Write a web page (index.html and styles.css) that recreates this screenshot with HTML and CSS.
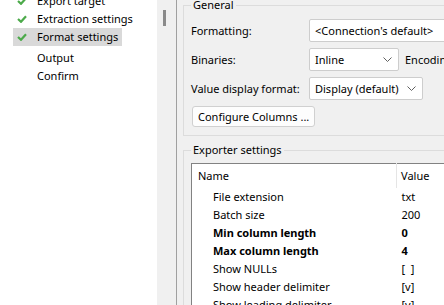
FILE: index.html
```html
<!DOCTYPE html>
<html>
    <head>
        <title>Data transfer - Format settings</title>
        <link rel="stylesheet" href="styles.css">
    </head>
    <body>
        <div class="window">
            <div class="nav">
                <ul class="steps">
                    <li><span class="step"><svg class="check" viewBox="0 0 10 8"><polyline points="1,4 4,6.8 9,1.2"/></svg>Export target</span></li>
                    <li><span class="step"><svg class="check" viewBox="0 0 10 8"><polyline points="1,4 4,6.8 9,1.2"/></svg>Extraction settings</span></li>
                    <li><span class="step selected"><svg class="check" viewBox="0 0 10 8"><polyline points="1,4 4,6.8 9,1.2"/></svg>Format settings</span></li>
                    <li><span class="step"><span class="no-check"></span>Output</span></li>
                    <li><span class="step"><span class="no-check"></span>Confirm</span></li>
                </ul>
            </div>
            <div class="gutter"><div class="thumb"></div></div>
            <div class="main">
                <fieldset class="group general">
                    <legend>General</legend>
                    <div class="form-grid">
                        <label>Formatting:</label>
                        <div class="combo wide">&lt;Connection's default&gt;</div>

                        <label>Binaries:</label>
                        <div class="inline-row">
                            <div class="combo binaries">Inline<svg class="arrow" viewBox="0 0 9 5"><polyline points="0.5,0.5 4.5,4.5 8.5,0.5"/></svg></div>
                            <span class="side-label">Encoding:</span>
                        </div>

                        <label>Value display format:</label>
                        <div class="combo display">Display (default)<svg class="arrow" viewBox="0 0 9 5"><polyline points="0.5,0.5 4.5,4.5 8.5,0.5"/></svg></div>
                    </div>
                    <button class="btn">Configure Columns ...</button>
                </fieldset>

                <fieldset class="group exporter">
                    <legend>Exporter settings</legend>
                    <table class="props">
                        <thead>
                            <tr>
                                <th class="col-name">Name</th>
                                <th class="col-value">Value</th>
                            </tr>
                        </thead>
                        <tbody>
                            <tr><td class="prop">File extension</td><td>txt</td></tr>
                            <tr><td class="prop">Batch size</td><td>200</td></tr>
                            <tr class="changed"><td class="prop">Min column length</td><td>0</td></tr>
                            <tr class="changed"><td class="prop">Max column length</td><td>4</td></tr>
                            <tr><td class="prop">Show NULLs</td><td>[&nbsp;&nbsp;]</td></tr>
                            <tr><td class="prop">Show header delimiter</td><td>[v]</td></tr>
                            <tr><td class="prop">Show leading delimiter</td><td>[v]</td></tr>
                        </tbody>
                    </table>
                </fieldset>
            </div>
        </div>
    </body>
</html>
```

FILE: styles.css
```css
body{
    margin: 0;
    width: 444px;
    height: 305px;
    overflow: hidden;
    background-color: #f0f0f0;
    font-family: "Noto Sans", "Open Sans", sans-serif;
    font-size: 11px;
    line-height: 16px;
    color: #000;
}

.window{
    display: flex;
    height: 305px;
}

/* wizard steps on the left */
.nav{
    flex: none;
    width: 157px;
    background-color: #fff;
}

.steps{
    list-style: none;
    margin: -8px 0 0 0;
    padding: 0 0 0 13px;
}

.steps li{
    height: 18px;
}

.step{
    display: inline-flex;
    align-items: center;
    height: 18px;
    padding: 0 4px;
    gap: 10px;
    white-space: nowrap;
}

.step.selected{
    background-color: #d9d9d9;
}

.check{
    width: 10px;
    height: 8px;
    fill: none;
    stroke: #4caa4a;
    stroke-width: 2.2;
}

.no-check{
    width: 10px;
}

.gutter{
    flex: none;
    width: 19px;
    border-right: 1px solid #a0a0a0;
}

.thumb{
    width: 3px;
    height: 16px;
    margin: 10px 0 0 6px;
    background-color: #8a8a8a;
}

.main{
    flex: none;
    width: 420px;
    padding-left: 6px;
}

/* group boxes */
.group{
    margin: 0;
    border: 1px solid #dcdcdc;
    padding: 6px 7px 7px 7px;
    min-width: 0;
}

.group legend{
    padding: 0 2px;
    line-height: 16px;
}

.general{
    margin-top: -3px;
    padding-bottom: 8px;
}

.exporter{
    margin-top: 6px;
    padding-top: 5px;
    height: 200px;
}

.form-grid{
    display: grid;
    grid-template-columns: 118px auto;
    row-gap: 6px;
    align-items: center;
    white-space: nowrap;
}

.combo{
    box-sizing: border-box;
    height: 23px;
    display: flex;
    align-items: center;
    justify-content: space-between;
    padding: 0 6px 0 5px;
    background-color: #fff;
    border: 1px solid #cdcdcd;
    border-radius: 2px;
}

.combo.wide{
    width: 175px;
}

.combo.binaries{
    width: 90px;
}

.combo.display{
    width: 114px;
}

.arrow{
    width: 9px;
    height: 5px;
    fill: none;
    stroke: #606060;
    stroke-width: 1;
}

.inline-row{
    display: flex;
    align-items: center;
    gap: 6px;
}

.btn{
    box-sizing: border-box;
    display: block;
    margin: 6px 0 0 1px;
    height: 21px;
    padding: 0 5px;
    font: inherit;
    color: #000;
    background-color: #fdfdfd;
    border: 1px solid #d0d0d0;
    border-radius: 3px;
}

/* property table */
.props{
    border-collapse: collapse;
    border-spacing: 0;
    width: 300px;
    background-color: #fff;
    border-left: 1px solid #828282;
    border-top: 1px solid #828282;
}

.props th{
    height: 24px;
    padding: 0;
    font-weight: normal;
    text-align: left;
}

.props .col-name{
    width: 198px;
    padding-left: 6px;
    border-right: 1px solid #e5e5e5;
}

.props .col-value{
    padding-left: 4px;
}

.props td{
    height: 18px;
    padding: 0 0 0 5px;
    white-space: nowrap;
}

.props td.prop{
    padding-left: 21px;
}

.props tr.changed td{
    font-weight: bold;
}
```
